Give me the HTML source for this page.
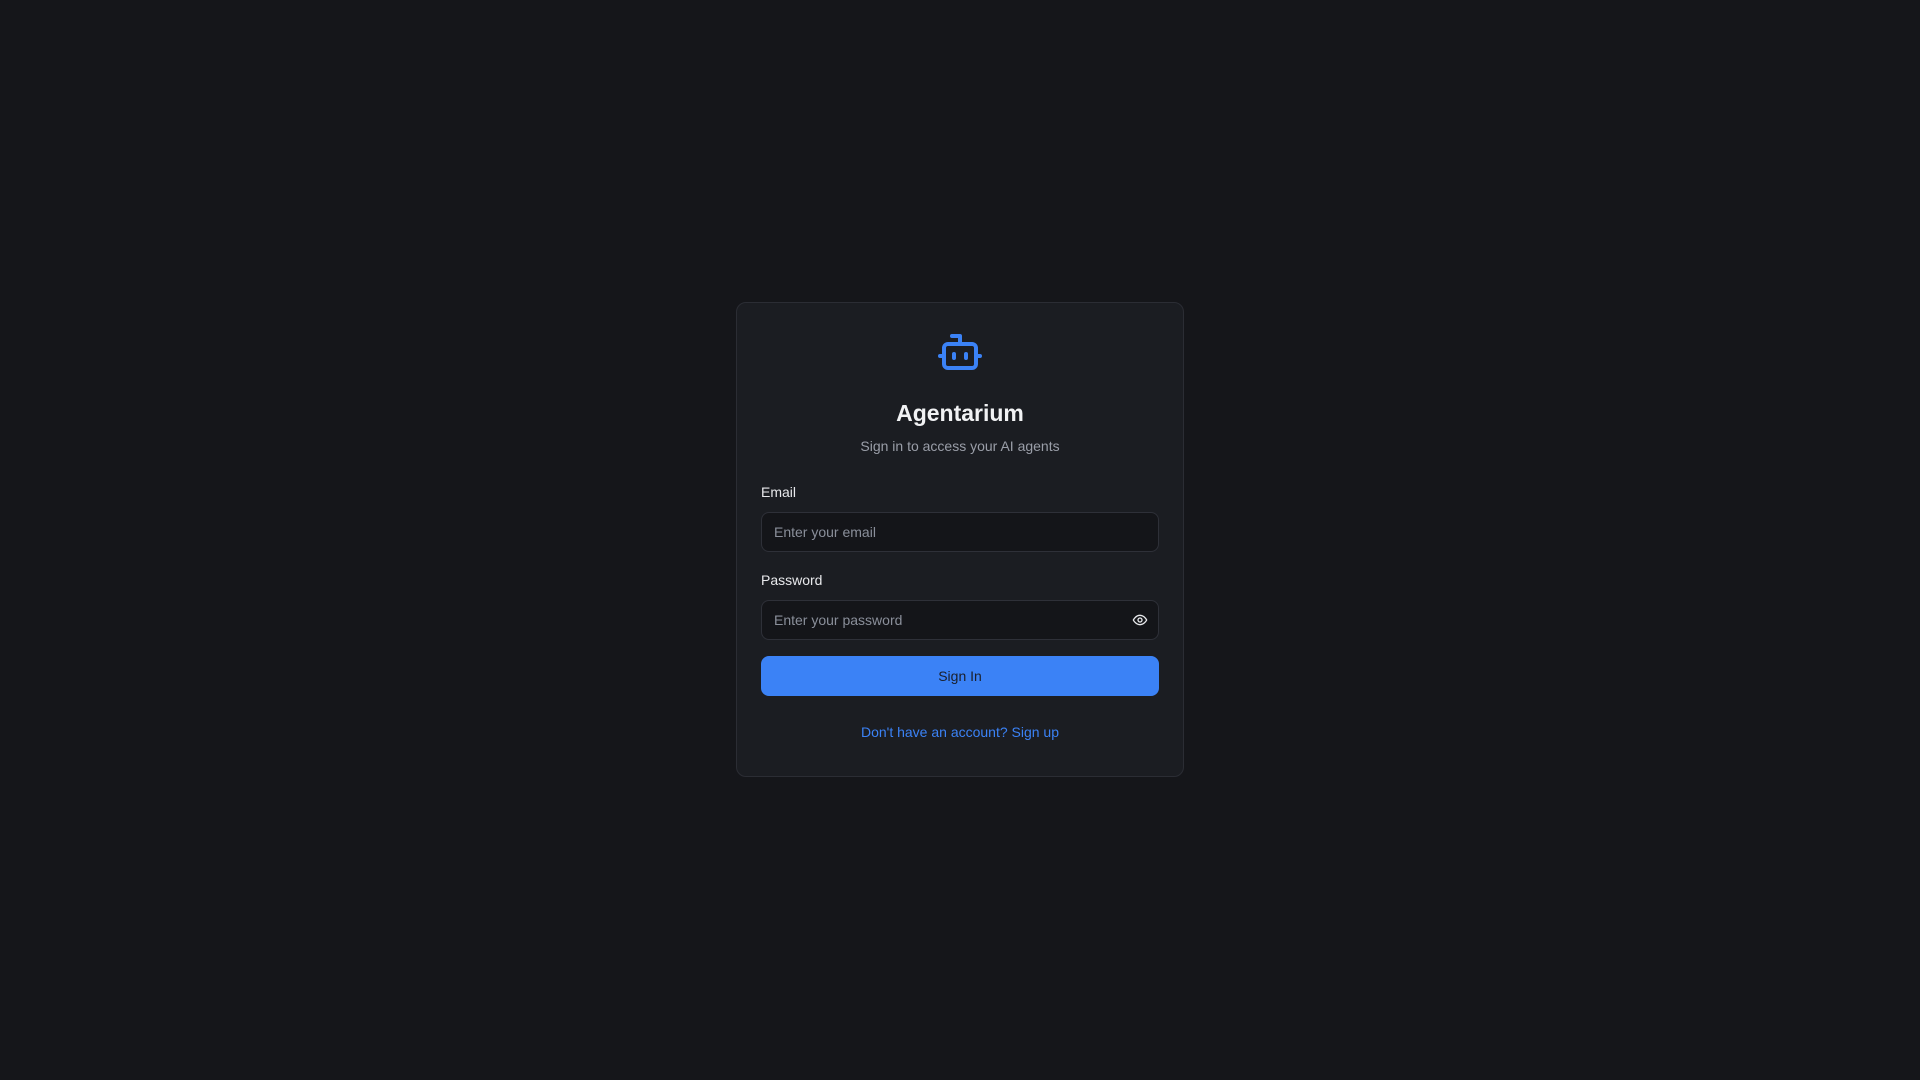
<!DOCTYPE html>
<html><head><meta charset="utf-8"><style>
html,body{margin:0;height:100%;background:#15161a;font-family:"Liberation Sans",sans-serif;}
.card{position:absolute;left:736px;top:302px;width:446px;height:473px;background:#1b1d22;border:1px solid #2b2d34;border-radius:10px;box-sizing:content-box;}
.abs{position:absolute;}
.title{left:0;width:100%;top:399px;text-align:center;color:#f1f2f4;font-weight:bold;font-size:23px;line-height:28px;}
.sub{left:0;width:100%;top:437px;text-align:center;color:#9a9ea8;font-size:14px;line-height:18px;}
.lbl{left:761px;color:#e8e9ec;font-size:14px;line-height:18px;}
.inp{left:761px;width:396px;height:38px;background:#141519;border:1px solid #2e3038;border-radius:8px;}
.ph{position:absolute;left:12px;top:11px;color:#8a8f9a;font-size:14px;line-height:16px;}
.btn{left:761px;top:656px;width:398px;height:40px;background:#3b82f6;border-radius:8px;color:#1a1f2b;font-size:14px;text-align:center;line-height:40px;}
.link{left:0;width:100%;top:723px;text-align:center;color:#3b82f6;font-size:14px;line-height:18px;}
</style></head><body>
<div class="card"></div>
<svg class="abs" style="left:936px;top:328px" width="48" height="48" viewBox="0 0 24 24" fill="none" stroke="#3b82f6" stroke-width="2" stroke-linecap="round" stroke-linejoin="round"><path d="M12 8V4H8"/><rect x="4" y="8" width="16" height="12" rx="2"/><path d="M2 14h2M20 14h2M15 13v2M9 13v2"/></svg>
<div class="abs title">Agentarium</div>
<div class="abs sub">Sign in to access your AI agents</div>
<div class="abs lbl" style="top:483px">Email</div>
<div class="abs inp" style="top:512px"><span class="ph">Enter your email</span></div>
<div class="abs lbl" style="top:571px">Password</div>
<div class="abs inp" style="top:600px"><span class="ph">Enter your password</span>
<svg style="position:absolute;right:10px;top:11px" width="16" height="16" viewBox="0 0 24 24" fill="none" stroke="#e8e9ec" stroke-width="2" stroke-linecap="round" stroke-linejoin="round"><path d="M2 12s3.5-7 10-7 10 7 10 7-3.5 7-10 7S2 12 2 12z"/><circle cx="12" cy="12" r="3"/></svg></div>
<div class="abs btn">Sign In</div>
<div class="abs link">Don't have an account? Sign up</div>
</body></html>
